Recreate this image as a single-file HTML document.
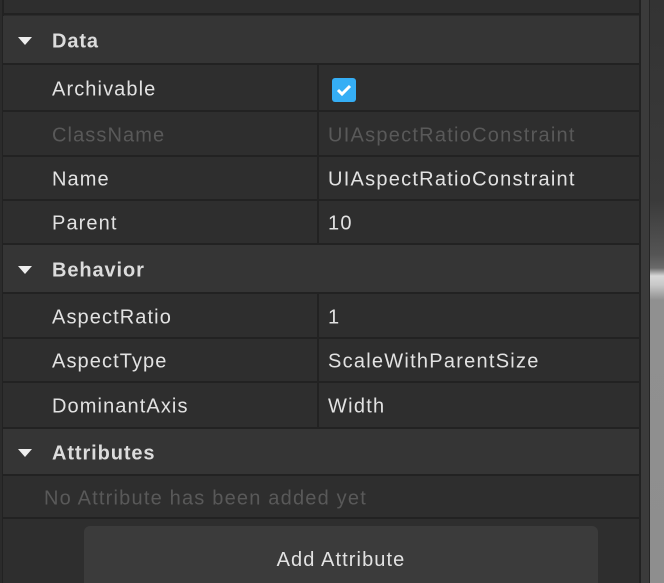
<!DOCTYPE html>
<html><head><meta charset="utf-8"><style>
*{margin:0;padding:0;box-sizing:border-box}
html,body{width:664px;height:583px;overflow:hidden}
body{background:#2b2b2b;position:relative;font-family:"Liberation Sans",sans-serif;font-size:20px;color:#e2e2e2}
.r{position:absolute;left:3px;width:636px;border-bottom:2px solid #222;background:#2e2e2e}
.h{background:#353535;font-weight:bold;color:#dcdcdc}
.t{position:absolute;left:52px;top:50%;margin-top:2px;transform:translateY(-50%);white-space:nowrap;letter-spacing:1.1px}
.h .t{left:49px;letter-spacing:0.9px}
.v{position:absolute;left:325px;top:50%;margin-top:2px;transform:translateY(-50%);white-space:nowrap;letter-spacing:1.25px}
.d{position:absolute;left:314px;top:0;bottom:0;width:2px;background:#222}
.g{color:#595959}
.tri{position:absolute;left:15px;top:50%;margin-top:-3px;width:0;height:0;border-left:7px solid transparent;border-right:7px solid transparent;border-top:8px solid #eee}
</style></head><body>
<div style="position:absolute;left:3px;top:0;width:636px;height:15px;background:#2e2e2e;border-bottom:2px solid #222"></div>
<div style="position:absolute;left:2px;top:0;width:2px;height:583px;background:#222"></div>
<div class="r h" style="top:16px;height:49px"><div class="tri"></div><div class="t">Data</div></div>
<div class="r" style="top:65px;height:47px"><div class="t" style="left:49px">Archivable</div><div class="d"></div>
<div style="position:absolute;left:329px;top:13px;width:24px;height:24px;background:#35aef5;border-radius:3px"><svg width="24" height="24"><path d="M6 12 L10 16 L18 8" stroke="#fff" stroke-width="3" fill="none"/></svg></div></div>
<div class="r" style="top:112px;height:45px"><div class="t g" style="left:49px">ClassName</div><div class="d"></div><div class="v g">UIAspectRatioConstraint</div></div>
<div class="r" style="top:157px;height:44px"><div class="t" style="left:49px">Name</div><div class="d"></div><div class="v">UIAspectRatioConstraint</div></div>
<div class="r" style="top:201px;height:44px"><div class="t" style="left:49px">Parent</div><div class="d"></div><div class="v">10</div></div>
<div class="r h" style="top:245px;height:49px"><div class="tri"></div><div class="t">Behavior</div></div>
<div class="r" style="top:294px;height:45px"><div class="t" style="left:49px">AspectRatio</div><div class="d"></div><div class="v">1</div></div>
<div class="r" style="top:339px;height:44px"><div class="t" style="left:49px">AspectType</div><div class="d"></div><div class="v">ScaleWithParentSize</div></div>
<div class="r" style="top:383px;height:46px"><div class="t" style="left:49px">DominantAxis</div><div class="d"></div><div class="v">Width</div></div>
<div class="r h" style="top:429px;height:47px"><div class="tri"></div><div class="t">Attributes</div></div>
<div class="r" style="top:476px;height:43px"><div class="t g" style="left:41px;letter-spacing:1.2px">No Attribute has been added yet</div></div>
<div style="position:absolute;left:3px;top:519px;width:636px;height:64px;background:#2e2e2e"></div>
<div style="position:absolute;left:84px;top:526px;width:514px;height:57px;background:#3b3b3b;border-radius:6px 6px 0 0;text-align:center;line-height:68px;letter-spacing:1.1px">Add Attribute</div>
<div style="position:absolute;left:639px;top:0;width:2px;height:583px;background:#222"></div>
<div style="position:absolute;left:641px;top:0;width:8px;height:583px;background:#3b3b3b"></div>
<div style="position:absolute;left:649px;top:0;width:1px;height:583px;background:#262626"></div>
<div style="position:absolute;left:650px;top:0;width:14px;height:583px;background:linear-gradient(#333 0px,#3a3a3a 200px,#555 255px,#6a6a6a 268px,#d8d8d8 276px,#c8c8c8 285px,#909090 300px,#8e8e8e 583px)"></div>
</body></html>
